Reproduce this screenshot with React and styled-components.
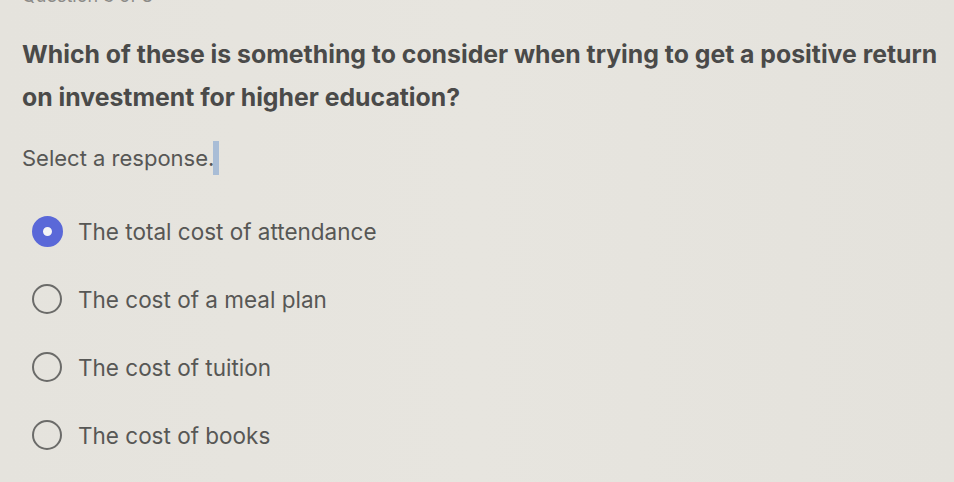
import React from "react";
import styled, { createGlobalStyle } from "styled-components";

const Global = createGlobalStyle`
  html, body { margin: 0; padding: 0; }
  body {
    width: 954px; height: 482px; overflow: hidden;
    background: linear-gradient(90deg, #e5e3dd 0%, #e7e5df 50%, #e4e2dc 100%);
    font-family: Inter, "Noto Sans", sans-serif;
  }
`;

const Page = styled.div`
  width: 954px;
  height: 482px;
  overflow: hidden;
  padding: 0 0 0 22px;
  box-sizing: border-box;
  display: flex;
  flex-direction: column;
`;

const Counter = styled.div`
  margin-top: -12px;
  height: 16px;
  font-size: 18px;
  color: #8c8b88;
  line-height: 16px;
`;

const Question = styled.h1`
  margin: 29px 0 0;
  font-size: 24.8px;
  font-weight: 700;
  line-height: 43px;
  color: #4a4a49;
  width: 925px;
`;

const Prompt = styled.div`
  margin-top: 22px;
  font-size: 22px;
  color: #575755;
  display: flex;
  align-items: center;
  height: 34px;
`;

const Caret = styled.span`
  display: inline-block;
  width: 6px;
  height: 34px;
  background: #a9bdd6;
  margin-left: -1px;
`;

const Options = styled.div`
  margin-top: 41px;
  display: flex;
  flex-direction: column;
  gap: 38px;
`;

const Option = styled.label`
  display: flex;
  align-items: center;
  height: 30px;
  gap: 16px;
  padding-left: 10px;
  font-size: 22.5px;
  color: #575755;
`;

const Radio = styled.span`
  width: ${p => (p.$checked ? "31px" : "30px")};
  height: ${p => (p.$checked ? "31px" : "30px")};
  margin-right: ${p => (p.$checked ? "-1px" : "0")};
  box-sizing: border-box;
  border-radius: 50%;
  border: ${p => (p.$checked ? "11px solid #5a68d8" : "2px solid #6b6b69")};
  background: ${p => (p.$checked ? "#f4f4f6" : "transparent")};
  flex: none;
`;

const options = [
  "The total cost of attendance",
  "The cost of a meal plan",
  "The cost of tuition",
  "The cost of books",
];

export default function App() {
  return (
    <>
      <Global />
      <Page>
        <Counter>Question 3 of 8</Counter>
        <Question>
          Which of these is something to consider when trying to get a positive return on investment for higher education?
        </Question>
        <Prompt>
          Select a response.<Caret />
        </Prompt>
        <Options>
          {options.map((o, i) => (
            <Option key={o}>
              <Radio $checked={i === 0} />
              {o}
            </Option>
          ))}
        </Options>
      </Page>
    </>
  );
}
